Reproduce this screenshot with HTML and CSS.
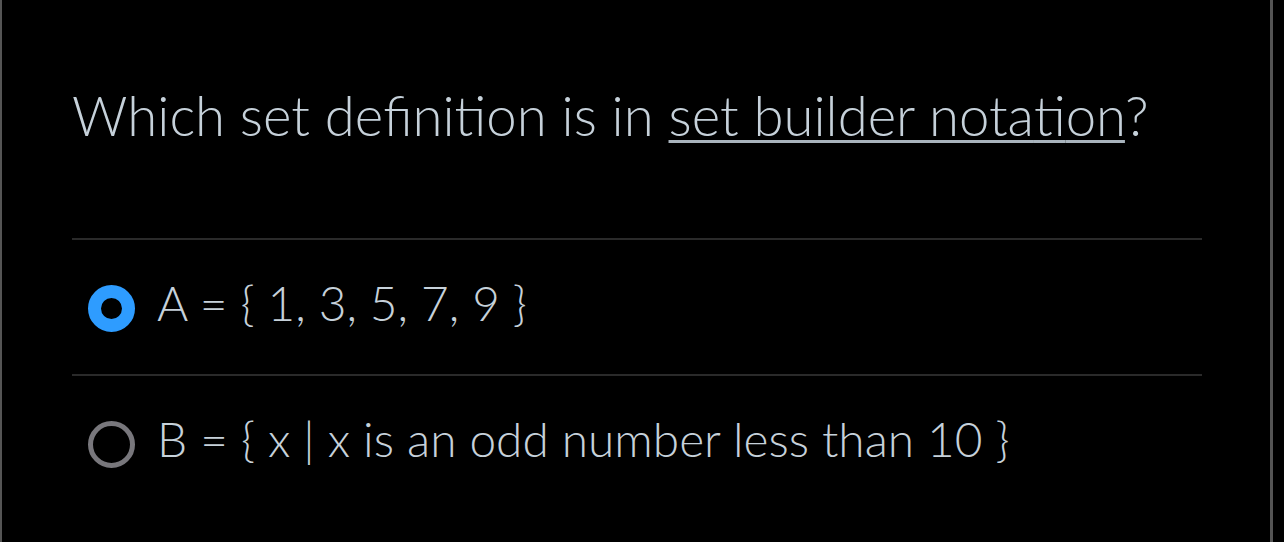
FILE: index.html
```html
<!DOCTYPE html>
<html lang="en">
<head>
<meta charset="utf-8">
<title>Set builder notation question</title>
<link rel="stylesheet" href="styles.css">
</head>
<body>
<div class="frame">
  <h1 class="question">Which set defini<span class="lig">ti</span>on is in <span class="term">set builder nota<span class="lig">ti</span>on</span>?</h1>
  <div class="options">
    <label class="option">
      <span class="radio radio-checked"></span>
      <span class="option-text">A = { 1, 3, 5, 7, 9 }</span>
    </label>
    <label class="option">
      <span class="radio"></span>
      <span class="option-text">B = { x | x is an odd number less than 10 }</span>
    </label>
  </div>
</div>
</body>
</html>
```
FILE: styles.css
```css
html, body {
  margin: 0;
  padding: 0;
  background: #000;
}
body {
  width: 1284px;
  height: 542px;
  overflow: hidden;
  font-family: Lato, "Open Sans", sans-serif;
  font-weight: 300;
  color: #c6d1da;
}
.frame {
  width: 1268px;
  height: 542px;
  border-left: 2px solid #555;
  border-right: 3px solid #555;
  box-sizing: content-box;
  padding: 0;
}
.question {
  margin: 0;
  padding: 82px 0 0 70px;
  font-size: 54.5px;
  line-height: 66px;
  font-weight: 300;
}
.lig {
  font-variant-ligatures: discretionary-ligatures;
}
.term {
  text-decoration: underline;
  text-decoration-color: #a9b4bd;
  text-decoration-thickness: 3px;
  text-underline-offset: 4px;
}
.options {
  margin: 90px 68px 0 70px;
  border-top: 2px solid #2a2a2a;
}
.option {
  display: flex;
  align-items: flex-start;
  gap: 22px;
  height: 136px;
  box-sizing: border-box;
  padding: 45px 0 0 16px;
  border-bottom: 2px solid #2a2a2a;
}
.option:last-child {
  border-bottom: none;
}
.radio {
  flex: none;
  width: 47px;
  height: 47px;
  box-sizing: border-box;
  border-radius: 50%;
  border: 5px solid #78777c;
}
.radio-checked {
  border: 13px solid #2e9cff;
}
.option-text {
  margin-top: -6px;
  font-size: 47.8px;
  line-height: 48px;
  font-weight: 300;
  white-space: nowrap;
}
```
